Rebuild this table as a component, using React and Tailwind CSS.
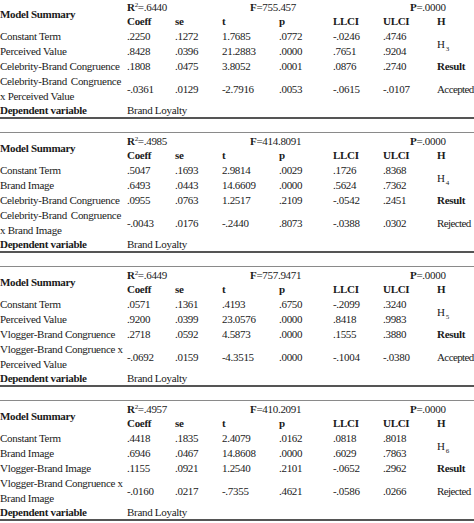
import React from "react";

const blocks = [
  {
    r2: ".6440", f: "755.457", h: "3", result: "Accepted",
    rows: [
      ["Constant Term", ".2250", ".1272", "1.7685", ".0772", "-.0246", ".4746"],
      ["Perceived Value", ".8428", ".0396", "21.2883", ".0000", ".7651", ".9204"],
      ["Celebrity-Brand Congruence", ".1808", ".0475", "3.8052", ".0001", ".0876", ".2740"],
    ],
    last: [["Celebrity-Brand Congruence", "x Perceived Value"], "-.0361", ".0129", "-2.7916", ".0053", "-.0615", "-.0107"],
  },
  {
    r2: ".4985", f: "414.8091", h: "4", result: "Rejected",
    rows: [
      ["Constant Term", ".5047", ".1693", "2.9814", ".0029", ".1726", ".8368"],
      ["Brand Image", ".6493", ".0443", "14.6609", ".0000", ".5624", ".7362"],
      ["Celebrity-Brand Congruence", ".0955", ".0763", "1.2517", ".2109", "-.0542", ".2451"],
    ],
    last: [["Celebrity-Brand Congruence", "x Brand Image"], "-.0043", ".0176", "-.2440", ".8073", "-.0388", ".0302"],
  },
  {
    r2: ".6449", f: "757.9471", h: "5", result: "Accepted",
    rows: [
      ["Constant Term", ".0571", ".1361", ".4193", ".6750", "-.2099", ".3240"],
      ["Perceived Value", ".9200", ".0399", "23.0576", ".0000", ".8418", ".9983"],
      ["Vlogger-Brand Congruence", ".2718", ".0592", "4.5873", ".0000", ".1555", ".3880"],
    ],
    last: [["Vlogger-Brand Congruence x", "Perceived Value"], "-.0692", ".0159", "-4.3515", ".0000", "-.1004", "-.0380"],
  },
  {
    r2: ".4957", f: "410.2091", h: "6", result: "Rejected",
    rows: [
      ["Constant Term", ".4418", ".1835", "2.4079", ".0162", ".0818", ".8018"],
      ["Brand Image", ".6946", ".0467", "14.8608", ".0000", ".6029", ".7863"],
      ["Vlogger-Brand Image", ".1155", ".0921", "1.2540", ".2101", "-.0652", ".2962"],
    ],
    last: [["Vlogger-Brand Congruence x", "Brand Image"], "-.0160", ".0217", "-.7355", ".4621", "-.0586", ".0266"],
  },
];

function Block({ b, first }) {
  return (
    <div
      className={
        "border-t border-b-2 border-t-[#8a8a8a] border-b-[#555] pt-[1px] " +
        (first ? "" : "mt-[13px]")
      }
    >
      <div className="grid grid-cols-[127px_48px_47px_57px_54px_50px_54px_1fr] grid-rows-[14px_15px_15px_15px_15px_30px_13px] leading-[15px] whitespace-nowrap">
        <div className="col-start-1 row-start-1 row-span-2 self-center font-bold">Model Summary</div>
        <div className="col-start-2 col-span-2 row-start-1 self-center">
          <b>R</b>
          <sup className="text-[7px] -top-[0.55em]">2</sup>=
          {b.r2}
        </div>
        <div className="col-start-4 col-span-3 row-start-1 self-center pl-[28px]">
          <b>F</b>={b.f}
        </div>
        <div className="col-start-7 col-span-2 row-start-1 self-center pl-[27px]">
          <b>P</b>=.0000
        </div>

        {["Coeff", "se", "t", "p", "LLCI", "ULCI", "H"].map((h, i) => (
          <div key={h} className="row-start-2 self-center font-bold" style={{ gridColumnStart: i + 2 }}>
            {h}
          </div>
        ))}

        {b.rows.map((r, ri) =>
          r.map((c, ci) => (
            <div
              key={ri + "-" + ci}
              className="self-center"
              style={{ gridRowStart: ri + 3, gridColumnStart: ci + 1 }}
            >
              {c}
            </div>
          ))
        )}

        <div className="col-start-8 row-start-3 row-span-2 self-center">
          H<sub className="text-[7px] -bottom-[0.45em] ml-[1px]">{b.h}</sub>
        </div>
        <div className="col-start-8 row-start-5 self-center font-bold">Result</div>

        <div className="col-start-1 row-start-6 self-center w-[121px]">
          <div className="text-justify [text-align-last:justify] whitespace-nowrap">{b.last[0][0]}</div>
          <div>{b.last[0][1]}</div>
        </div>
        {b.last.slice(1).map((c, ci) => (
          <div key={"l" + ci} className="row-start-6 self-center" style={{ gridColumnStart: ci + 2 }}>
            {c}
          </div>
        ))}
        <div className="col-start-8 row-start-6 self-center tracking-[-0.6px]">{b.result}</div>

        <div className="col-start-1 row-start-7 self-center font-bold">Dependent variable</div>
        <div className="col-start-2 col-span-4 row-start-7 self-center">Brand Loyalty</div>
      </div>
    </div>
  );
}

export default function App() {
  return (
    <div className="w-[474px] h-[523px] overflow-hidden bg-white">
      <div className="-mt-[2px] font-['Liberation_Serif',serif] text-[11px] tracking-[-0.3px] text-[#1a1a1a]">
        {blocks.map((b, i) => (
          <Block key={i} b={b} first={i === 0} />
        ))}
      </div>
    </div>
  );
}
